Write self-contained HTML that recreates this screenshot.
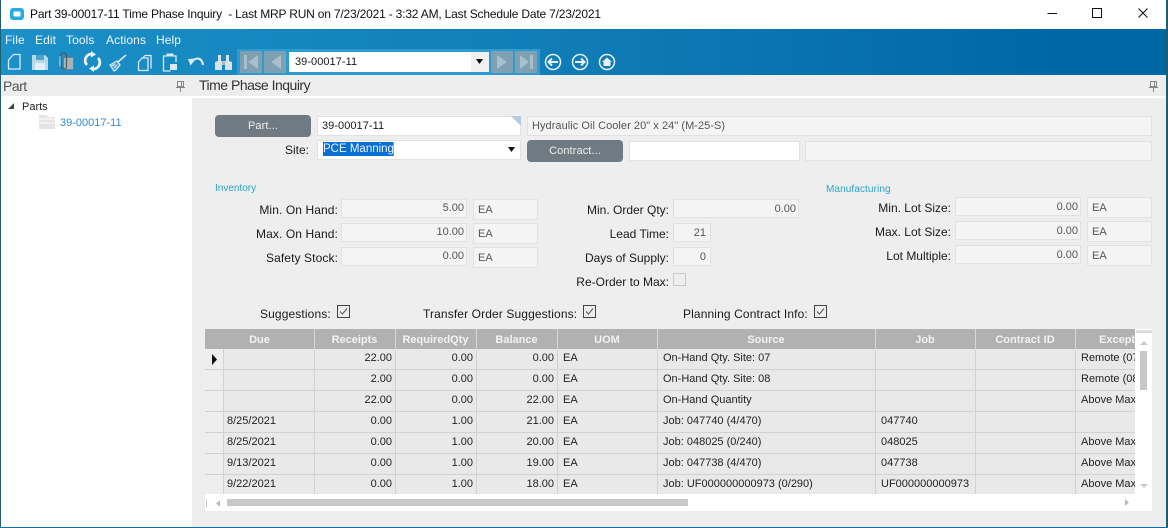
<!DOCTYPE html>
<html><head><meta charset="utf-8"><title>Time Phase Inquiry</title>
<style>
html,body{margin:0;padding:0}
body{width:1168px;height:528px;position:relative;overflow:hidden;background:#fff;font-family:"Liberation Sans",sans-serif;font-size:12px;color:#1a1a1a}
div,span,svg{position:absolute}
.t{white-space:nowrap;line-height:14px}
.r{text-align:right;white-space:nowrap;line-height:14px}
.in{box-sizing:border-box;background:#f4f4f4;border:1px solid #e2e2e2;height:20px}
.g{color:#555}
.n{font-size:11px}
.btn{background:#6f7a82;border-radius:4px;color:#f0f0f0;text-align:center;height:22px;line-height:22px;font-size:11px;letter-spacing:.1px}
.sec{color:#2aa3c9;font-size:10px}
.hd{color:#f2f2f2;font-weight:bold;font-size:11px;text-align:center;top:334px;line-height:13px;white-space:nowrap;overflow:hidden}
.c{font-size:11px;line-height:13px;white-space:nowrap;overflow:hidden;color:#222}
.vl{width:1px;background:#d2d2d2;top:349px;height:145px}
.hl{left:205px;width:930px;height:1px;background:#d2d2d2}
.hv{width:1px;background:#d8d8d8;top:329px;height:20px}
</style></head><body>
<!-- title bar -->
<svg style="left:10px;top:8px" width="14" height="12"><rect x="0" y="0" width="14" height="12" rx="3" fill="#29abe2"/><rect x="3.500" y="3.500" width="7" height="5" rx="1" fill="#fff"/></svg>
<div class="t" style="left:30px;top:7px;color:#111;letter-spacing:-.19px">Part 39-00017-11 Time Phase Inquiry&nbsp; - Last MRP RUN on 7/23/2021 - 3:32 AM, Last Schedule Date 7/23/2021</div>
<svg style="left:1040px;top:0" width="128" height="29" fill="none" stroke="#111"><path d="M7.500 13.500H17"/><rect x="52.500" y="8.500" width="9" height="9"/><path d="M98.500 8.500l9 9M107.500 8.500l-9 9"/></svg>

<!-- toolbar -->
<div style="left:0;top:29px;width:1168px;height:46px;background:linear-gradient(90deg,#1c90c8,#0f7cb6 50%,#0067a5 90%)"></div>
<div class="t" style="left:5px;top:33px;color:#f2f6fa;letter-spacing:.1px">File</div>
<div class="t" style="left:35px;top:33px;color:#f2f6fa;letter-spacing:.1px">Edit</div>
<div class="t" style="left:66px;top:33px;color:#f2f6fa;letter-spacing:.1px">Tools</div>
<div class="t" style="left:106px;top:33px;color:#f2f6fa;letter-spacing:.1px">Actions</div>
<div class="t" style="left:156px;top:33px;color:#f2f6fa;letter-spacing:.1px">Help</div>

<svg style="left:0;top:48px" width="240" height="26" fill="none" stroke="#dbe9f2" stroke-width="1.300">
<!-- new doc -->
<path d="M8.500 12l5-5.500h6.500v14.500H8.500z"/>
<!-- save -->
<path d="M32 7h13l3 3v12H32z" fill="#b9d8e8" stroke="none"/><rect x="36" y="7" width="8" height="5" fill="#4fa4cf" stroke="none"/><rect x="35" y="15" width="10" height="7" fill="#e4eff5" stroke="none"/>
<!-- paste with clip -->
<rect x="63.500" y="9.500" width="10" height="12" fill="#a6b4bc" stroke="#6f7f88" stroke-width="1"/>
<path d="M60.500 8c0-4 6-4 6 0v10c0 4-5 4-5 0V9" stroke="#4d5c66" stroke-width="1.200"/><path d="M60 8.500v10" stroke="#c9d4da" stroke-width="1"/>
<!-- refresh -->
<path d="M87 17a6.500 6.500 0 0 1 5-11" stroke="#eef5f9" stroke-width="2.800"/><path d="M91 3l5 3.500-5 3z" fill="#eef5f9" stroke="none"/>
<path d="M98 10a6.500 6.500 0 0 1-5 11" stroke="#eef5f9" stroke-width="2.800"/><path d="M94 24l-5-3.500 5-3z" fill="#eef5f9" stroke="none"/>
<!-- broom -->
<path d="M126 7l-8 7" stroke-width="1.600"/><path d="M117 13l-7 4 4 6 2-1 4-5z M112 18l3-2 M114 20l3-3" stroke-width="1.200" fill="#4ba3d0"/>
<!-- copy -->
<path d="M141 12l4-4.500h6v13"/><path d="M138.500 14l3.500-4h6v12.500h-9.500z" fill="#1c8cc4"/>
<!-- clipboard -->
<path d="M167 8h-3.500v15h7M173 8h3v6" /><path d="M167 8V6h6v2z" fill="#dbe9f2" stroke-width="1"/><rect x="170" y="16" width="7" height="6" fill="#dbe9f2" stroke="none"/>
<!-- undo -->
<path d="M192 14c3-5 10-5 11 3" stroke-width="2.200"/><path d="M188 11l8-.5-5.500 7z" fill="#dbe9f2" stroke="none"/>
<!-- binoculars -->
<path d="M215 14l3-1h4v9h-7zM225 13h4l3 1v8h-7z" fill="#d8e2e7" stroke="none"/><path d="M218 7h3v6h-3zM226 7h3v6h-3z" fill="#d8e2e7" stroke="none"/><path d="M222 13h3v4h-3z" fill="#a7bbc6" stroke="none"/>
</svg>

<div style="left:237px;top:49px;width:303px;height:26px;background:#2d9ad0"></div>
<div style="left:240px;top:51px;width:22px;height:22px;background:#7f9fb2"></div>
<div style="left:264px;top:51px;width:22px;height:22px;background:#7f9fb2"></div>
<svg style="left:240px;top:51px" width="46" height="22" fill="#a9bfcb"><rect x="4" y="4" width="3" height="14"/><path d="M18 4v14l-10-7zM41 4v14l-10-7z"/></svg>
<div style="left:289px;top:52px;width:200px;height:20px;background:#fff"></div>
<div style="left:471px;top:52px;width:18px;height:20px;background:#f1f1f1"></div>
<div class="t" style="left:295px;top:55px;font-size:11px;letter-spacing:.05px">39-00017-11</div>
<svg style="left:475px;top:59px" width="10" height="6"><path d="M1 0h7L4.500 5z" fill="#111"/></svg>
<div style="left:491px;top:51px;width:22px;height:22px;background:#7f9fb2"></div>
<div style="left:515px;top:51px;width:22px;height:22px;background:#7f9fb2"></div>
<svg style="left:491px;top:51px" width="46" height="22" fill="#a9bfcb"><path d="M6 4v14l10-7zM29 4v14l9-7z"/><rect x="39" y="4" width="3" height="14"/></svg>
<svg style="left:544px;top:51px" width="72" height="22" fill="none" stroke="#e6f0f6" stroke-width="1.500">
<circle cx="9" cy="11" r="7.500"/><path d="M14 11H5M8 7.500L4.500 11 8 14.500" stroke-width="2"/>
<circle cx="36" cy="11" r="7.500"/><path d="M31 11h9M37 7.500l3.500 3.500-3.500 3.500" stroke-width="2"/>
<circle cx="63" cy="11" r="7.500"/><path d="M58 11l5-4.500 5 4.500h-1.500v4h-7v-4z" fill="#e6f0f6" stroke="none"/>
</svg>

<!-- panes -->
<div style="left:1px;top:75px;width:191px;height:21px;background:#eee"></div>
<div class="t" style="left:3px;top:79px;font-size:14px;color:#555;line-height:15px;letter-spacing:-.5px">Part</div>
<svg style="left:176px;top:81px" width="9" height="11" fill="none" stroke="#888"><path d="M1.500.5h6v5h-6zM0 6.500h9M4.500 6.500V11M5.500 1v4" /></svg>
<svg style="left:8px;top:103px" width="7" height="7"><path d="M6 0v6H0z" fill="#444"/></svg>
<div class="t" style="left:22px;top:100px;font-size:11px;color:#222">Parts</div>
<svg style="left:39px;top:115px" width="16" height="14"><path d="M0 0h8l1 2h7v12H0z" fill="#e4e4e4"/><path d="M0 4h16M0 8h16" stroke="#fff" fill="none"/></svg>
<div class="t" style="left:60px;top:116px;font-size:11px;color:#2f8ad8">39-00017-11</div>

<div style="left:192px;top:75px;width:974px;height:452px;background:#eee"></div>
<div style="left:192px;top:96px;width:974px;height:2px;background:#fff"></div>
<div class="t" style="left:199px;top:78px;font-size:14px;color:#333;line-height:15px;letter-spacing:-.5px">Time Phase Inquiry</div>
<svg style="left:1149px;top:81px" width="9" height="11" fill="none" stroke="#888"><path d="M1.500.5h6v5h-6zM0 6.500h9M4.500 6.500V11M5.500 1v4" /></svg>

<!-- header form -->
<div class="btn" style="left:215px;top:115px;width:96px">Part...</div>
<div class="in" style="left:317px;top:116px;width:204px;background:#fff"></div>
<svg style="left:511px;top:116px" width="10" height="10"><path d="M0 0h10v10z" fill="#b5c9e2"/></svg>
<div class="t" style="left:322px;top:119px;font-size:11px;letter-spacing:.05px">39-00017-11</div>
<div class="in" style="left:527px;top:116px;width:625px"></div>
<div class="t g" style="left:532px;top:119px;font-size:11px;letter-spacing:.05px">Hydraulic Oil Cooler 20" x 24" (M-25-S)</div>
<div class="r" style="right:859px;top:143px">Site:</div>
<div class="in" style="left:317px;top:140px;width:204px;background:#fff"></div>
<div style="left:323px;top:142px;width:70px;height:14px;background:#0a6fd0;border-right:1px solid #f08020"></div>
<div class="t" style="left:323px;top:142px;color:#e8f4ff;font-size:11.500px">PCE Manning</div>
<svg style="left:507px;top:147px" width="10" height="6"><path d="M1 0h7L4.500 5z" fill="#111"/></svg>
<div class="btn" style="left:527px;top:140px;width:96px">Contract...</div>
<div class="in" style="left:629px;top:141px;width:171px;background:#fff"></div>
<div class="in" style="left:805px;top:141px;width:347px"></div>

<div class="t sec" style="left:215px;top:182px">Inventory</div>
<div class="t sec" style="left:826px;top:183px;letter-spacing:.1px">Manufacturing</div>

<div class="r" style="right:830px;top:203px;letter-spacing:.1px">Min. On Hand:</div>
<div class="in" style="left:341px;top:199px;width:126px;height:19px"></div>
<div class="r g n" style="right:704px;top:201px">5.00</div>
<div class="in" style="left:473px;top:199px;width:65px;height:21px"></div>
<div class="t g" style="left:478px;top:203px;font-size:11px">EA</div>

<div class="r" style="right:830px;top:227px;letter-spacing:.1px">Max. On Hand:</div>
<div class="in" style="left:341px;top:223px;width:126px;height:19px"></div>
<div class="r g n" style="right:704px;top:225px">10.00</div>
<div class="in" style="left:473px;top:223px;width:65px;height:21px"></div>
<div class="t g" style="left:478px;top:227px;font-size:11px">EA</div>

<div class="r" style="right:830px;top:251px;letter-spacing:.1px">Safety Stock:</div>
<div class="in" style="left:341px;top:247px;width:126px;height:19px"></div>
<div class="r g n" style="right:704px;top:249px">0.00</div>
<div class="in" style="left:473px;top:247px;width:65px;height:21px"></div>
<div class="t g" style="left:478px;top:251px;font-size:11px">EA</div>

<div class="r" style="right:499px;top:203px">Min. Order Qty:</div>
<div class="in" style="left:673px;top:199px;width:126px;height:19px"></div>
<div class="r g" style="right:372px;top:202px;font-size:11px">0.00</div>
<div class="r" style="right:499px;top:227px">Lead Time:</div>
<div class="in" style="left:673px;top:223px;width:38px;height:19px"></div>
<div class="r g" style="right:462px;top:226px;font-size:11px">21</div>
<div class="r" style="right:499px;top:251px">Days of Supply:</div>
<div class="in" style="left:673px;top:247px;width:38px;height:19px"></div>
<div class="r g" style="right:462px;top:250px;font-size:11px">0</div>
<div class="r" style="right:499px;top:275px">Re-Order to Max:</div>
<div style="left:673px;top:273px;width:11px;height:11px;border:1px solid #c8c8c8"></div>

<div class="r" style="right:217px;top:201px">Min. Lot Size:</div>
<div class="in" style="left:955px;top:197px;width:126px;height:19px"></div>
<div class="r g" style="right:90px;top:200px;font-size:11px">0.00</div>
<div class="in" style="left:1087px;top:197px;width:65px;height:21px"></div>
<div class="t g" style="left:1092px;top:201px;font-size:11px">EA</div>
<div class="r" style="right:217px;top:225px">Max. Lot Size:</div>
<div class="in" style="left:955px;top:221px;width:126px;height:19px"></div>
<div class="r g" style="right:90px;top:224px;font-size:11px">0.00</div>
<div class="in" style="left:1087px;top:221px;width:65px;height:21px"></div>
<div class="t g" style="left:1092px;top:225px;font-size:11px">EA</div>
<div class="r" style="right:217px;top:249px">Lot Multiple:</div>
<div class="in" style="left:955px;top:245px;width:126px;height:19px"></div>
<div class="r g" style="right:90px;top:248px;font-size:11px">0.00</div>
<div class="in" style="left:1087px;top:245px;width:65px;height:21px"></div>
<div class="t g" style="left:1092px;top:249px;font-size:11px">EA</div>

<div class="t" style="left:260px;top:307px;letter-spacing:.12px">Suggestions:</div>
<svg style="left:337px;top:305px" width="13" height="13" fill="none"><rect x=".5" y=".5" width="12" height="12" stroke="#444"/><path d="M3 6.500l2.500 2.500L10 3.500" stroke="#555"/></svg>
<div class="t" style="left:423px;top:307px;letter-spacing:.12px">Transfer Order Suggestions:</div>
<svg style="left:583px;top:305px" width="13" height="13" fill="none"><rect x=".5" y=".5" width="12" height="12" stroke="#444"/><path d="M3 6.500l2.500 2.500L10 3.500" stroke="#555"/></svg>
<div class="t" style="left:683px;top:307px;letter-spacing:.12px">Planning Contract Info:</div>
<svg style="left:814px;top:305px" width="13" height="13" fill="none"><rect x=".5" y=".5" width="12" height="12" stroke="#444"/><path d="M3 6.500l2.500 2.500L10 3.500" stroke="#555"/></svg>

<!-- grid -->
<div style="left:205px;top:329px;width:947px;height:182px;background:#fff"></div>
<div style="left:205px;top:329px;width:930px;height:20px;background:#b1b1b1"></div>
<div style="left:223px;top:349px;width:912px;height:145px;background:#e9e9e9"></div>
<div style="left:205px;top:349px;width:18px;height:145px;background:#eeeeee"></div>
<div class="hd" style="left:205px;width:109px">Due</div>
<div class="hd" style="left:314px;width:81px">Receipts</div>
<div class="hd" style="left:395px;width:81px">RequiredQty</div>
<div class="hd" style="left:476px;width:81px">Balance</div>
<div class="hd" style="left:557px;width:100px">UOM</div>
<div class="hd" style="left:657px;width:218px">Source</div>
<div class="hd" style="left:875px;width:100px">Job</div>
<div class="hd" style="left:975px;width:100px">Contract ID</div>
<div class="hd" style="left:1075px;width:60px;text-align:left;padding-left:24px;box-sizing:border-box">Exception</div>

<div class="hv" style="left:314px"></div><div class="hv" style="left:395px"></div><div class="hv" style="left:476px"></div><div class="hv" style="left:557px"></div><div class="hv" style="left:657px"></div><div class="hv" style="left:875px"></div><div class="hv" style="left:975px"></div><div class="hv" style="left:1075px"></div>
<div class="vl" style="left:223px"></div><div class="vl" style="left:314px"></div><div class="vl" style="left:395px"></div><div class="vl" style="left:476px"></div><div class="vl" style="left:557px"></div><div class="vl" style="left:657px"></div><div class="vl" style="left:875px"></div><div class="vl" style="left:975px"></div><div class="vl" style="left:1075px"></div>
<div class="hl" style="top:369px"></div><div class="hl" style="top:390px"></div><div class="hl" style="top:411px"></div><div class="hl" style="top:432px"></div><div class="hl" style="top:453px"></div><div class="hl" style="top:474px"></div>
<svg style="left:211px;top:354px" width="7" height="11"><path d="M1 0l5 5.500L1 11z" fill="#111"/></svg>

<!-- rows -->
<div class="c r" style="right:776px;top:352px">22.00</div><div class="c r" style="right:695px;top:352px">0.00</div><div class="c r" style="right:614px;top:352px">0.00</div><div class="c" style="left:563px;top:352px">EA</div><div class="c" style="left:663px;top:352px">On-Hand Qty. Site: 07</div><div class="c" style="left:1081px;top:352px;width:54px">Remote (07)</div>
<div class="c r" style="right:776px;top:373px">2.00</div><div class="c r" style="right:695px;top:373px">0.00</div><div class="c r" style="right:614px;top:373px">0.00</div><div class="c" style="left:563px;top:373px">EA</div><div class="c" style="left:663px;top:373px">On-Hand Qty. Site: 08</div><div class="c" style="left:1081px;top:373px;width:54px">Remote (08)</div>
<div class="c r" style="right:776px;top:394px">22.00</div><div class="c r" style="right:695px;top:394px">0.00</div><div class="c r" style="right:614px;top:394px">22.00</div><div class="c" style="left:563px;top:394px">EA</div><div class="c" style="left:663px;top:394px">On-Hand Quantity</div><div class="c" style="left:1081px;top:394px;width:54px">Above Max</div>
<div class="c" style="left:227px;top:415px">8/25/2021</div><div class="c r" style="right:776px;top:415px">0.00</div><div class="c r" style="right:695px;top:415px">1.00</div><div class="c r" style="right:614px;top:415px">21.00</div><div class="c" style="left:563px;top:415px">EA</div><div class="c" style="left:663px;top:415px">Job: 047740 (4/470)</div><div class="c" style="left:881px;top:415px">047740</div>
<div class="c" style="left:227px;top:436px">8/25/2021</div><div class="c r" style="right:776px;top:436px">0.00</div><div class="c r" style="right:695px;top:436px">1.00</div><div class="c r" style="right:614px;top:436px">20.00</div><div class="c" style="left:563px;top:436px">EA</div><div class="c" style="left:663px;top:436px">Job: 048025 (0/240)</div><div class="c" style="left:881px;top:436px">048025</div><div class="c" style="left:1081px;top:436px;width:54px">Above Max</div>
<div class="c" style="left:227px;top:457px">9/13/2021</div><div class="c r" style="right:776px;top:457px">0.00</div><div class="c r" style="right:695px;top:457px">1.00</div><div class="c r" style="right:614px;top:457px">19.00</div><div class="c" style="left:563px;top:457px">EA</div><div class="c" style="left:663px;top:457px">Job: 047738 (4/470)</div><div class="c" style="left:881px;top:457px">047738</div><div class="c" style="left:1081px;top:457px;width:54px">Above Max</div>
<div class="c" style="left:227px;top:478px">9/22/2021</div><div class="c r" style="right:776px;top:478px">0.00</div><div class="c r" style="right:695px;top:478px">1.00</div><div class="c r" style="right:614px;top:478px">18.00</div><div class="c" style="left:563px;top:478px">EA</div><div class="c" style="left:663px;top:478px">Job: UF000000000973 (0/290)</div><div class="c" style="left:881px;top:478px">UF000000000973</div><div class="c" style="left:1081px;top:478px;width:54px">Above Max</div>

<!-- scrollbars -->
<div style="left:206px;top:499px;width:1px;height:8px;background:#ccc"></div>
<svg style="left:216px;top:500px" width="5" height="7"><path d="M4 0v7L0 3.500z" fill="#bbb"/></svg>
<div style="left:227px;top:499px;width:461px;height:7px;background:#c8c8c8"></div>
<svg style="left:1125px;top:499px" width="5" height="7"><path d="M0 0v7l4-3.500z" fill="#bbb"/></svg>
<div style="left:1136px;top:330px;width:16px;height:3px;background:#ddd"></div>
<svg style="left:1140px;top:341px" width="8" height="5"><path d="M0 4l4-4 4 4z" fill="#ccc"/></svg>
<div style="left:1140px;top:351px;width:7px;height:39px;background:#c8c8c8"></div>
<svg style="left:1140px;top:484px" width="8" height="5"><path d="M0 0l4 4 4-4z" fill="#ccc"/></svg>

<!-- window edges -->
<div style="left:0;top:0;width:1px;height:528px;background:#1d5f6a"></div>
<div style="left:1166px;top:0;width:2px;height:528px;background:#1d5f6a"></div>
<div style="left:0;top:527px;width:1168px;height:1px;background:#0f6ea8"></div>
</body></html>
